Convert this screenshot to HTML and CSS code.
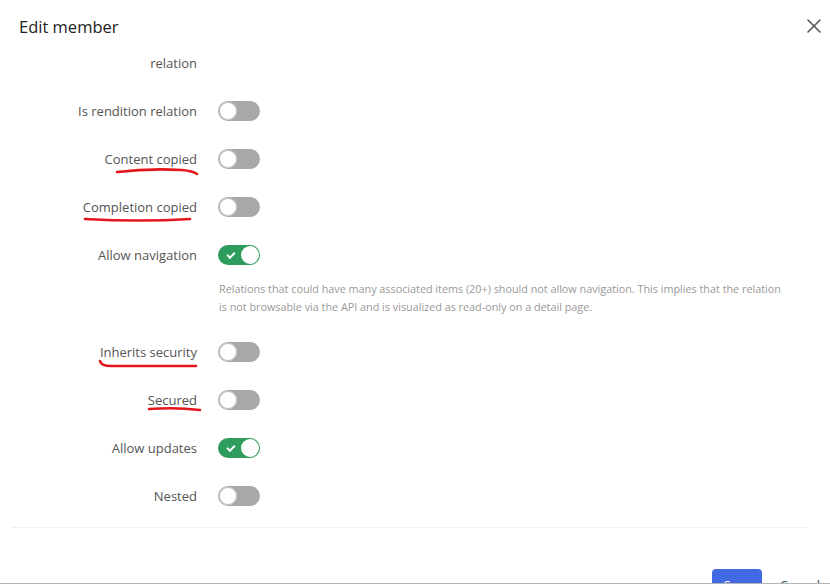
FILE: index.html
```html
<!DOCTYPE html>
<html lang="en">

<head>
    <meta charset="UTF-8">
    <meta name="viewport" content="width=device-width, initial-scale=1.0">
    <title>Edit member</title>
    <link rel="stylesheet" href="styles.css">
</head>

<body>

    <div class="modal">
        <div class="modal-header">
            <h2 class="modal-title">Edit member</h2>
            <span class="close">
                <svg width="14" height="14" viewBox="0 0 14 14">
                    <path d="M1 1 L13 13 M13 1 L1 13" stroke="#555" stroke-width="1.6" stroke-linecap="round" />
                </svg>
            </span>
        </div>

        <div class="modal-body">
            <div class="form">

                <div class="row">
                    <label class="label">Is parent-child<br>relation</label>
                </div>

                <div class="row">
                    <label class="label">Is rendition relation</label>
                    <span class="toggle"></span>
                </div>

                <div class="row">
                    <label class="label">Content copied</label>
                    <span class="toggle"></span>
                </div>

                <div class="row">
                    <label class="label">Completion copied</label>
                    <span class="toggle"></span>
                </div>

                <div class="row">
                    <label class="label">Allow navigation</label>
                    <span class="toggle on"></span>
                </div>
                <p class="help">Relations that could have many associated items (20+) should not allow navigation. This implies that the relation is not browsable via the API and is visualized as read-only on a detail page.</p>

                <div class="row">
                    <label class="label">Inherits security</label>
                    <span class="toggle"></span>
                </div>

                <div class="row">
                    <label class="label">Secured</label>
                    <span class="toggle"></span>
                </div>

                <div class="row">
                    <label class="label">Allow updates</label>
                    <span class="toggle on"></span>
                </div>

                <div class="row">
                    <label class="label">Nested</label>
                    <span class="toggle"></span>
                </div>

            </div>
        </div>

        <div class="divider"></div>

        <div class="modal-footer">
            <button class="btn btn-primary">Save</button>
            <button class="btn btn-link">Cancel</button>
        </div>

        <!-- hand drawn marks -->
        <svg class="marks" width="830" height="586" viewBox="0 0 830 586">
            <g fill="none" stroke="#e3161b" stroke-width="2.6" stroke-linecap="round">
                <path d="M117 172 Q 150 168 182 170 Q 193 171 197 174" />
                <path d="M85 219 Q 140 222 190 219" />
                <path d="M100 361 Q 101 366 111 366 L 196 366" />
                <path d="M149 409 Q 176 407 200 410" />
            </g>
        </svg>
    </div>

</body>

</html>
```

FILE: styles.css
```css
* {
    box-sizing: border-box;
}

body {
    font-family: "Open Sans", Arial, sans-serif;
    background-color: #fff;
    margin: 0;
    padding: 0;
}

.modal {
    position: relative;
    width: 830px;
    height: 584px;
    overflow: hidden;
    background-color: #fff;
    border-bottom: 1px solid #b4b4b4;
}

.modal-header {
    height: 58px;
    display: flex;
    justify-content: space-between;
    align-items: flex-start;
    padding: 14px 9px 0 19px;
}

.modal-title {
    margin: 0;
    font-size: 16.5px;
    font-weight: 500;
    color: #222;
    line-height: 26px;
}

.close {
    display: block;
    margin-top: 2px;
    cursor: pointer;
}

.modal-body {
    height: 469px;
    overflow: hidden;
}

.form {
    margin-top: -37px;
}

.row {
    display: flex;
    align-items: center;
    padding: 14px 0;
    min-height: 48px;
}

.label {
    width: 197px;
    text-align: right;
    font-size: 13px;
    line-height: 19px;
    color: #555;
    margin-right: 21px;
}

/* Toggle switch */
.toggle {
    position: relative;
    display: inline-block;
    width: 42px;
    height: 20px;
    border-radius: 10px;
    background-color: #a8a8a8;
}

.toggle::after {
    content: "";
    position: absolute;
    top: 1px;
    left: 1px;
    width: 18px;
    height: 18px;
    border-radius: 50%;
    background-color: #fff;
    box-shadow: 0 0 0 1px #bdbdbd inset;
}

.toggle.on {
    background-color: #2e9c5c;
}

.toggle.on::after {
    left: 23px;
    box-shadow: none;
}

.toggle.on::before {
    content: "";
    position: absolute;
    top: 7px;
    left: 9px;
    width: 6px;
    height: 3px;
    border-left: 2px solid #fff;
    border-bottom: 2px solid #fff;
    transform: rotate(-45deg);
}

.help {
    margin: 1px 0 12px 219px;
    max-width: 566px;
    font-size: 10.8px;
    line-height: 18px;
    color: #999;
}

.divider {
    height: 1px;
    margin: 0 22px 0 12px;
    background-color: #f0f0f0;
}

.modal-footer {
    display: flex;
    justify-content: flex-end;
    gap: 10px;
    padding-top: 41px;
}

.btn {
    font-family: "Open Sans", Arial, sans-serif;
    font-size: 13px;
    height: 32px;
    padding: 0 12px;
    border: none;
    border-radius: 4px;
    cursor: pointer;
}

.btn-primary {
    width: 50px;
    background-color: #4169e1;
    color: #fff;
}

.btn-link {
    background: none;
    padding: 0 10px 0 8px;
    color: #2f4f5f;
}

.marks {
    position: absolute;
    left: 0;
    top: 0;
    pointer-events: none;
}
```
